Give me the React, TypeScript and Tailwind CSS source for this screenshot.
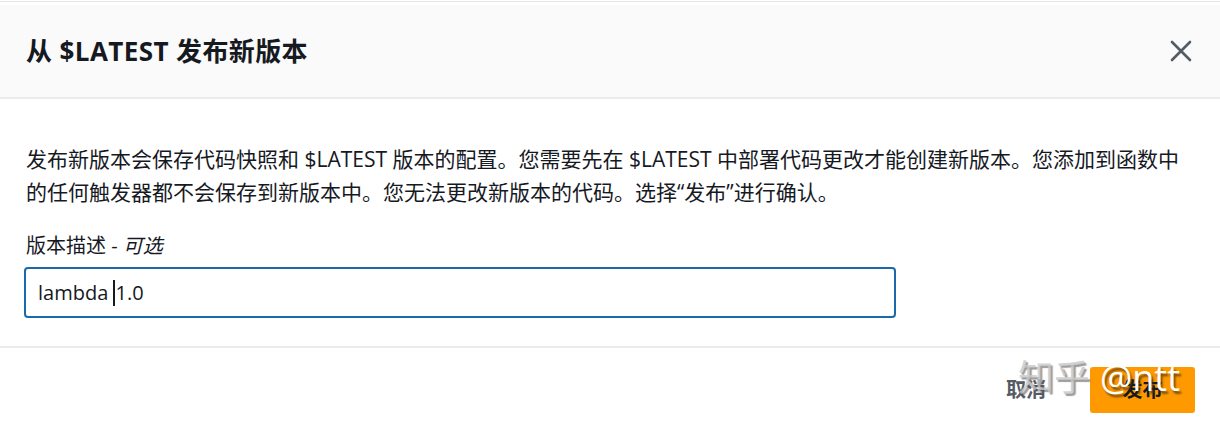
import React from 'react';

const FONT = { fontFamily: '"Open Sans", "Noto Sans CJK SC", sans-serif' };

const CloseIcon: React.FC = () => (
  <svg width="22" height="22" viewBox="0 0 22 22" fill="none">
    <path d="M2 2 L20 20 M20 2 L2 20" stroke="#545b64" strokeWidth="2.6" strokeLinecap="round" />
  </svg>
);

export default function App() {
  return (
    <div className="relative w-[1220px] h-[432px] overflow-hidden bg-white text-[#16191f]" style={FONT}>
      <div className="h-px mt-px bg-[#e6e6e6]" />
      <div className="h-[3px]" />

      {/* header */}
      <div className="h-[94px] bg-[#fafafa] border-b-2 border-[#ebebeb] flex items-center justify-between pl-[26px] pr-[27px]">
        <h2 className="text-[26px] font-bold leading-none tracking-[0.4px]">从 $LATEST 发布新版本</h2>
        <button className="flex items-center justify-center w-6 h-6">
          <CloseIcon />
        </button>
      </div>

      {/* body */}
      <div className="pl-[26px] pr-[26px] pt-[44px]">
        <p className="text-[21px] leading-[33px]">
          发布新版本会保存代码快照和 $LATEST 版本的配置。您需要先在 $LATEST 中部署代码更改才能创建新版本。您添加到函数中的任何触发器都不会保存到新版本中。您无法更改新版本的代码。选择“发布”进行确认。
        </p>
        <label className="block mt-[22px] text-[20px] leading-[30px]">
          版本描述 - <i>可选</i>
        </label>
        <div className="mt-[6px] ml-[-2px] w-[872px] h-[51px] border-2 border-[#1a6aab] rounded-[4px] flex items-center pl-[12px] text-[20px]">
          <span>lambda&nbsp;</span>
          <span className="w-[2px] h-[26px] bg-[#16191f]" />
          <span>1.0</span>
        </div>
      </div>

      <div className="mt-[28px] border-t-2 border-[#ebebeb]" />

      {/* footer */}
      <div className="flex justify-end items-center gap-[44px] pt-[19px] pr-[25px]">
        <button className="text-[20px] font-bold text-[#545b64]">取消</button>
        <button className="w-[105px] h-[46px] rounded-[3px] bg-[#ff9900] text-[20px] font-bold text-[#16191f]">
          发布
        </button>
      </div>

      {/* watermark */}
      <div className="absolute left-[1018px] top-[360px] flex items-baseline gap-[10px] text-[36px] leading-none pointer-events-none">
        <span className="text-[#c8c8c8]/80 [text-shadow:2px_2px_1px_rgba(90,90,90,0.6)]">知乎</span>
        <span className="text-white [text-shadow:2px_3px_2px_rgba(70,50,20,0.7)]" style={{ fontFamily: '"Open Sans", sans-serif' }}>
          @ntt
        </span>
      </div>
    </div>
  );
}
